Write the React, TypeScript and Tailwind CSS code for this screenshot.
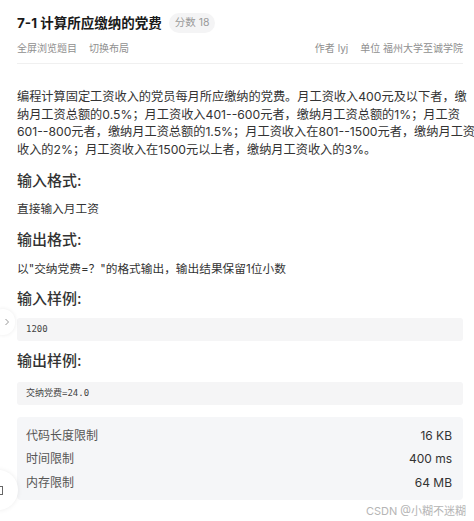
import React from 'react';

const font = "font-['Inter','Noto_Sans_CJK_SC',sans-serif]";
const mono = "font-['DejaVu_Sans_Mono','Noto_Sans_CJK_SC',monospace]";

const limits = [
  { label: '代码长度限制', value: '16 KB' },
  { label: '时间限制', value: '400 ms' },
  { label: '内存限制', value: '64 MB' },
];

const App: React.FC = () => {
  return (
    <div className={`relative w-[474px] h-[521px] overflow-hidden bg-white ${font}`}>
      <div className="pl-[17px] pr-[11px] pt-[11px]">
        {/* header */}
        <div className="flex items-center gap-[7px]">
          <h1 className="text-[13.5px] leading-[24px] font-bold text-[#1a1a1a]">7-1 计算所应缴纳的党费</h1>
          <span className="rounded-full bg-[#f4f4f5] px-[6px] h-[20px] leading-[20px] text-[10.5px] text-[#9a9a9a]">分数 18</span>
        </div>
        <div className="mt-[5px] flex items-center justify-between text-[10px] leading-[16px] text-[#8f8f8f]">
          <div className="flex gap-[12px]">
            <span>全屏浏览题目</span>
            <span>切换布局</span>
          </div>
          <div className="flex gap-[12px]">
            <span>作者 lyj</span>
            <span>单位 福州大学至诚学院</span>
          </div>
        </div>
        <div className="mt-[7px] h-px bg-[#f0f0f0]" />

        {/* body */}
        <p className="mt-[24px] text-[12.2px] leading-[17.7px] text-[#333] whitespace-nowrap">
          编程计算固定工资收入的党员每月所应缴纳的党费。月工资收入400元及以下者，缴
          <br />
          纳月工资总额的0.5%；月工资收入401--600元者，缴纳月工资总额的1%；月工资
          <br />
          601--800元者，缴纳月工资总额的1.5%；月工资收入在801--1500元者，缴纳月工资
          <br />
          收入的2%；月工资收入在1500元以上者，缴纳月工资收入的3%。
        </p>

        <h2 className="mt-[11px] text-[15px] leading-[22px] font-medium text-[#333]">输入格式:</h2>
        <p className="mt-[8px] text-[11.7px] leading-[18px] text-[#333]">直接输入月工资</p>

        <h2 className="mt-[11px] text-[15px] leading-[22px] font-medium text-[#333]">输出格式:</h2>
        <p className="mt-[9px] text-[11.7px] leading-[18px] text-[#333]">以"交纳党费=？"的格式输出，输出结果保留1位小数</p>

        <h2 className="mt-[10px] text-[15px] leading-[22px] font-medium text-[#333]">输入样例:</h2>
        <div className={`mt-[8px] h-[23px] rounded-[3px] bg-[#f5f5f6] pl-[9px] flex items-center ${mono} text-[9px] text-[#444]`}>
          1200
        </div>

        <h2 className="mt-[9px] text-[15px] leading-[22px] font-medium text-[#333]">输出样例:</h2>
        <div className={`mt-[10px] h-[23px] rounded-[3px] bg-[#f5f5f6] pl-[9px] flex items-center ${mono} text-[9px] text-[#444]`}>
          交纳党费=24.0
        </div>

        <div className="mt-[12px] rounded-[4px] bg-[#f5f6f8] pl-[9px] pr-[11px] pt-[7px] pb-[6px]">
          {limits.map((l) => (
            <div key={l.label} className="flex justify-between h-[23.5px] items-center text-[12px]">
              <span className="text-[#555]">{l.label}</span>
              <span className="text-[#333]">{l.value}</span>
            </div>
          ))}
        </div>
      </div>

      {/* side floating buttons */}
      <div className="absolute left-[-9px] top-[309px] w-[24px] h-[26px] rounded-full bg-white shadow-[0_0_4px_rgba(0,0,0,0.08)] flex items-center justify-end pr-[5px]">
        <svg width="6" height="8" viewBox="0 0 6 8" fill="none">
          <path d="M1.5 1L4.5 4L1.5 7" stroke="#999" strokeWidth="1" />
        </svg>
      </div>
      <div className="absolute left-[-22px] top-[470px] w-[40px] h-[40px] rounded-full bg-white shadow-[0_0_5px_rgba(0,0,0,0.08)] flex items-center justify-end pr-[15px]">
        <div className="w-[4px] h-[9px] border border-[#666] border-l-0" />
      </div>

      {/* watermark */}
      <div className="absolute right-[8px] bottom-[3px] text-[11px] leading-[14px] text-[#b5b5b5]">CSDN @小糊不迷糊</div>
    </div>
  );
};

export default App;
